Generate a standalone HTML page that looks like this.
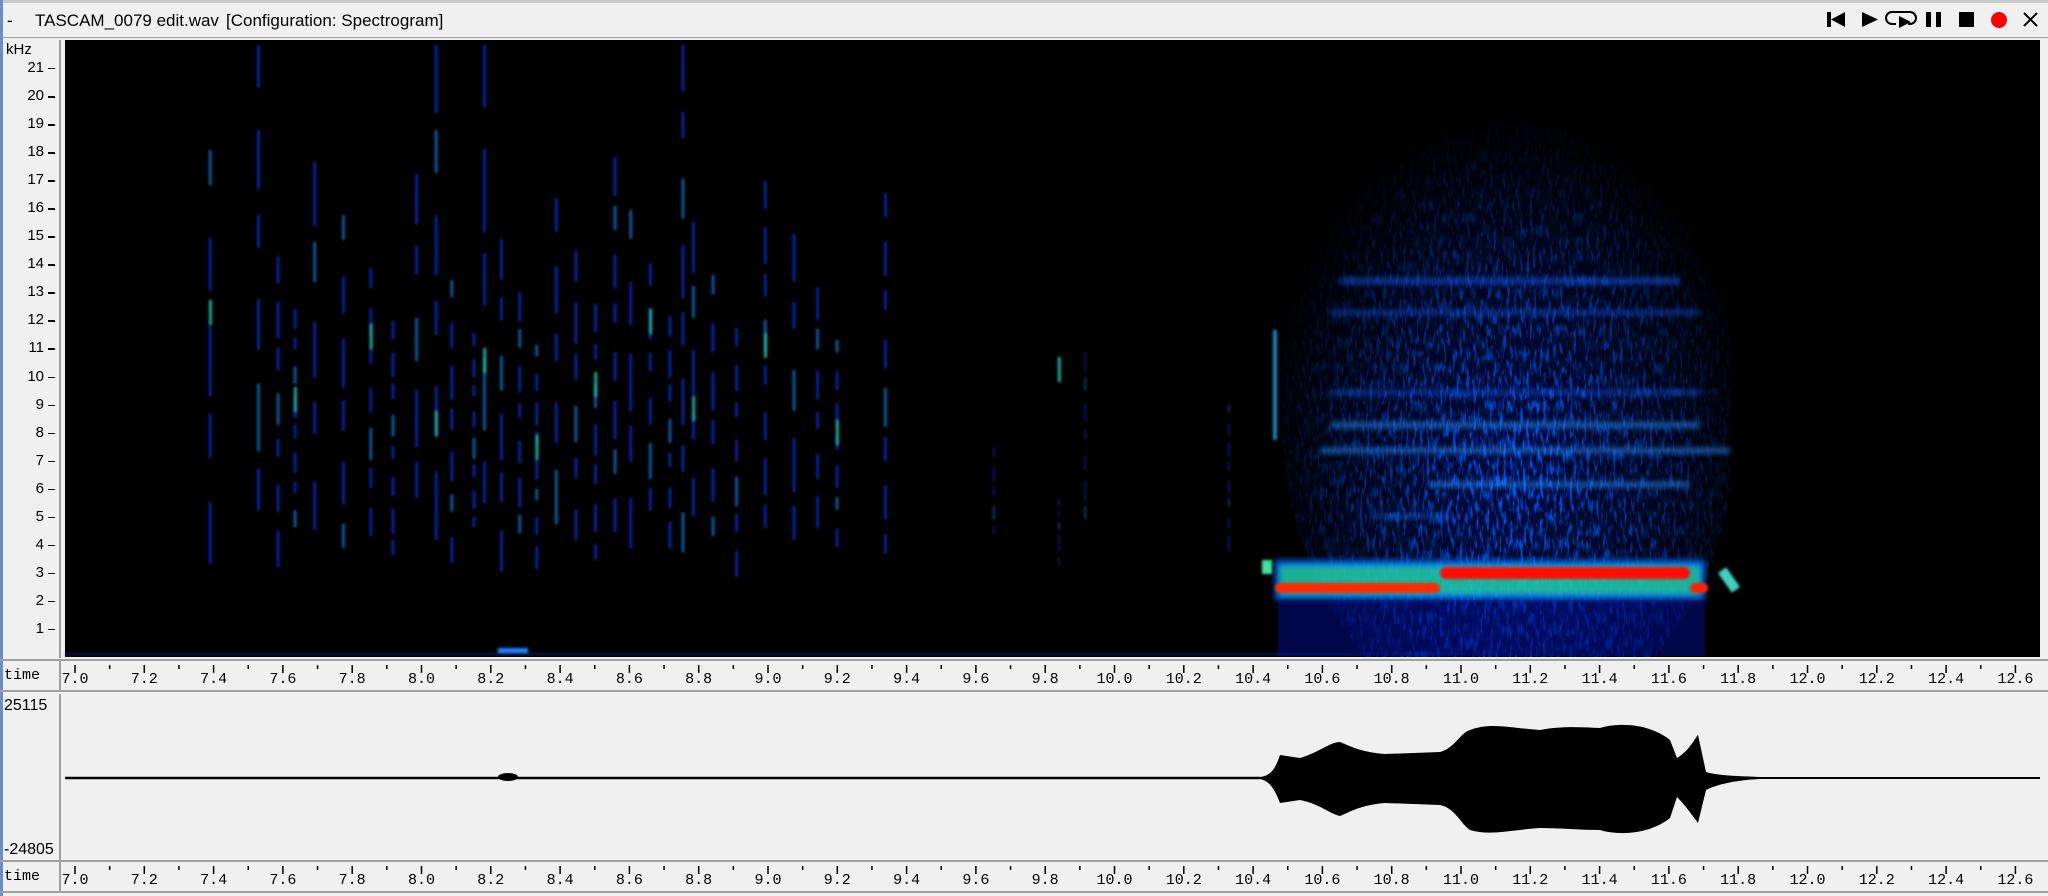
<!DOCTYPE html>
<html><head><meta charset="utf-8"><style>
html,body{margin:0;padding:0;width:2048px;height:896px;overflow:hidden;background:#f0f0f0;font-family:"Liberation Sans",sans-serif;}
.t{position:absolute;font-size:17px;color:#000;white-space:nowrap}
</style></head><body>
<div style="position:absolute;left:0;top:0;width:3px;height:896px;background:#6a8fc8"></div>
<div style="position:absolute;left:3px;top:0;width:2045px;height:3px;background:#c8c8c8"></div>
<div style="position:absolute;left:3px;top:37px;width:2045px;height:1px;background:#a0a0a0"></div>
<div class="t" style="left:7px;top:11px">-</div>
<div class="t" style="left:35px;top:11px">TASCAM_0079 edit.wav</div>
<div class="t" style="left:226px;top:11px">[Configuration: Spectrogram]</div>
<svg style="position:absolute;left:0;top:0" width="2048" height="40">
<rect x="1827" y="12" width="4" height="15"/><polygon points="1831,19.5 1845,12 1845,27"/>
<polygon points="1862,12 1878,19.5 1862,27"/>
<path d="M1896,24 h-4 a5,5 0 0 1 0,-12 h18 a5,5 0 0 1 0,12 h-2" fill="none" stroke="#000" stroke-width="2"/>
<polygon points="1899,16 1911,22 1899,28"/>
<rect x="1926" y="12" width="5" height="15"/><rect x="1936" y="12" width="5" height="15"/>
<rect x="1959" y="12" width="15" height="15"/>
<circle cx="1999" cy="20" r="8" fill="#f00"/>
<path d="M2024,13 L2037,26 M2037,13 L2024,26" stroke="#000" stroke-width="2"/>
</svg>
<div style="position:absolute;left:59px;top:40px;width:2px;height:618px;background:#a0a0a0"></div>
<div class="t" style="left:6px;top:41px;font-size:15px">kHz</div>
<div id="fl"></div>
<svg style="position:absolute;left:0;top:0" width="2048" height="896">
<defs>
<filter id="b1"><feGaussianBlur stdDeviation="1.2"/></filter>
<filter id="b3"><feGaussianBlur stdDeviation="3"/></filter>
<filter id="nz" x="0" y="0" width="100%" height="100%"><feTurbulence type="fractalNoise" baseFrequency="0.3 0.08" numOctaves="2" seed="3"/><feColorMatrix values="0 0 0 0 0  0 0 0 0 0.1  0 0 0 0 1  0 0 0 3.5 -1.6"/></filter>
<radialGradient id="cg" cx="0.5" cy="0.62" r="0.55"><stop offset="0" stop-color="#fff"/><stop offset="0.6" stop-color="#777"/><stop offset="1" stop-color="#000"/></radialGradient>
<mask id="cm"><ellipse cx="1510" cy="400" rx="230" ry="330" fill="url(#cg)"/></mask>
</defs>
<rect x="65" y="40" width="1975" height="617" fill="#000"/>
<g mask="url(#cm)"><rect x="1270" y="60" width="460" height="597" fill="#000a40"/><rect x="1270" y="60" width="460" height="597" filter="url(#nz)"/></g>
<g id="vl" filter="url(#b1)"></g>
<g filter="url(#b3)" opacity=".85">
<rect x="1340" y="278" width="340" height="6" fill="#1a5cff" opacity=".7"/>
<rect x="1330" y="310" width="370" height="5" fill="#1a5cff" opacity=".6"/>
<rect x="1330" y="390" width="370" height="5" fill="#1a5cff" opacity=".6"/>
<rect x="1330" y="422" width="370" height="6" fill="#2a8cff" opacity=".7"/>
<rect x="1320" y="448" width="410" height="5" fill="#2a8cff" opacity=".8"/>
<rect x="1430" y="482" width="260" height="5" fill="#2a8cff" opacity=".8"/>
<rect x="1370" y="514" width="80" height="4" fill="#1a6cff" opacity=".7"/>
<rect x="1275" y="560" width="430" height="40" fill="#0070ff"/>
<rect x="1280" y="566" width="420" height="28" fill="#20d0b0"/>
</g>
<g filter="url(#b1)">
<rect x="1275" y="583" width="165" height="10" rx="5" fill="#ff2a00"/>
<rect x="1440" y="567" width="250" height="12" rx="6" fill="#ff1000"/>
<rect x="1690" y="583" width="18" height="10" rx="5" fill="#ff2000"/>
<rect x="1262" y="560" width="10" height="14" fill="#40e0a0"/>
<rect x="1724" y="568" width="10" height="24" fill="#40d0c0" transform="rotate(-35 1729 580)"/>
<rect x="1273" y="330" width="4" height="110" fill="#20a0e0" opacity=".8"/>
<rect x="498" y="648" width="30" height="5" fill="#2080ff"/>
<rect x="65" y="653" width="1400" height="2" fill="#0030c0" opacity=".5"/>
</g>
<rect x="1278" y="600" width="427" height="56" fill="#0010a0" opacity=".45"/>
<rect x="0" y="659" width="2048" height="2" fill="#a0a0a0"/>
<rect x="0" y="690" width="2048" height="2" fill="#a0a0a0"/>
<rect x="59" y="661" width="2" height="29" fill="#a0a0a0"/>
<rect x="59" y="694" width="2" height="166" fill="#a0a0a0"/>
<rect x="0" y="860" width="2048" height="2" fill="#a0a0a0"/>
<rect x="59" y="862" width="2" height="29" fill="#a0a0a0"/>
<rect x="0" y="891" width="2048" height="2" fill="#a0a0a0"/>
<g id="tk"></g>
<path d="M65,778 L1260,778" stroke="#000" stroke-width="2.5"/>
<ellipse cx="508" cy="777" rx="10" ry="4"/>
<path d="M1260,777 C1270,776 1275,770 1280,755 L1300,758 C1320,752 1330,742 1340,742 C1350,746 1360,752 1385,754 L1440,752 C1455,748 1460,733 1470,730 C1490,722 1510,728 1540,730 C1560,726 1580,727 1600,728 C1620,722 1650,724 1670,740 L1677,758 C1690,750 1695,738 1698,735 L1706,772 C1720,776 1740,776 1760,777 L2040,777 L2040,779 L1760,779 C1740,780 1720,783 1706,790 L1698,823 C1692,815 1685,805 1677,797 L1670,818 C1650,834 1620,836 1600,830 C1580,830 1560,828 1540,828 C1510,830 1490,836 1470,830 C1460,823 1455,808 1440,805 L1385,803 C1360,805 1350,812 1340,816 C1330,814 1320,804 1300,800 L1280,803 C1275,790 1270,781 1260,779 Z"/>
</svg>
<div class="t" style="left:4px;top:697px;font-size:16px">25115</div>
<div class="t" style="left:4px;top:841px;font-size:16px">-24805</div>
<div class="t" style="left:4px;top:667px;font-family:'Liberation Mono',monospace;font-size:15px">time</div>
<div class="t" style="left:4px;top:868px;font-family:'Liberation Mono',monospace;font-size:15px">time</div>
<div id="tl"></div>
<script>
var s='http://www.w3.org/2000/svg';
var fl='';for(var k=1;k<=21;k++){var y=657-k*28.05;fl+='<div class="t" style="left:0;width:44px;text-align:right;top:'+(y-9)+'px;font-size:15px">'+k+'</div><div style="position:absolute;left:48px;top:'+y+'px;width:7px;height:1.5px;background:#000"></div>';}
document.getElementById('fl').innerHTML=fl;
var tk=document.getElementById('tk'),tl='';
for(var i=0;i<=57;i++){var x=75+i*0.1*346.5;if(x>2040)break;[662,863].forEach(function(y0){var r=document.createElementNS(s,'rect');r.setAttribute('x',x-0.75);r.setAttribute('y',y0+3);r.setAttribute('width',1.5);r.setAttribute('height',i%2?4:8);tk.appendChild(r);});
if(i%2==0){var v=(7+i/10).toFixed(1);[671,872].forEach(function(t){tl+='<div class="t" style="left:'+(x-20)+'px;width:40px;text-align:center;top:'+t+'px;font-family:\'Liberation Mono\',monospace;font-size:15px">'+v+'</div>';});}}
document.getElementById('tl').innerHTML=tl;
var xs=[160,197,212,225,240,262,283,300,318,333,345,362,370,383,397,410,425,440,455,470,482,497,512,522,530,545,563,585,607,625,640,677,760,810,830,940];
var vl=document.getElementById('vl');
xs.forEach(function(d,j){var x=d*1.306;var top=150+((j*53)%200)+(d>700?200:0);if(d==370||d==333||d==522||d==197)top=45;var bot=590-((j*37)%60);
var segs=5+(j%4);var h=(bot-top)/segs;
for(var q=0;q<segs;q++){var r=document.createElementNS(s,'rect');r.setAttribute('x',x);r.setAttribute('y',top+q*h);r.setAttribute('width',2.5);r.setAttribute('height',h*(0.4+((q*7+j)%5)/10));r.setAttribute('fill',(q+j)%5==0?'#1e90ff':'#0a3cff');r.setAttribute('opacity',d>700?0.35:0.7);vl.appendChild(r);}
if(j%3==0){var c=document.createElementNS(s,'rect');c.setAttribute('x',x);c.setAttribute('y',300+(j*29)%150);c.setAttribute('width',3);c.setAttribute('height',25);c.setAttribute('fill','#30d0c0');c.setAttribute('opacity',.8);vl.appendChild(c);}});
</script>
</body></html>
